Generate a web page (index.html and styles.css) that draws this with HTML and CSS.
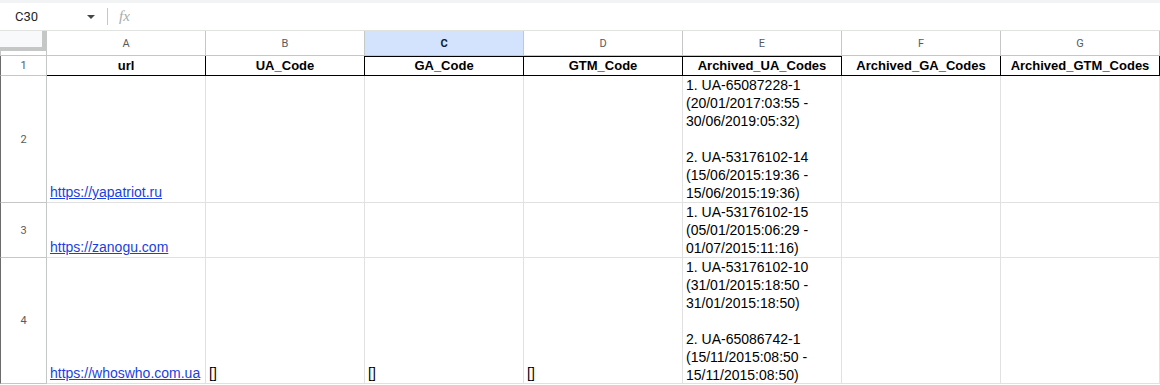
FILE: index.html
```html
<!doctype html>
<html lang="en">
  <head>
    <meta charset="UTF-8" />
    <meta name="viewport" content="width=device-width, initial-scale=1.0" />
    <title>Tracking codes sheet</title>
    <link rel="stylesheet" href="styles.css">
  </head>
  <body>
    <!-- Name box and formula bar -->
    <div class="toolbar">
      <div class="name-box">
        <span class="cell-ref">C30</span>
        <span class="caret"></span>
      </div>
      <span class="divider"></span>
      <span class="fx">fx</span>
    </div>

    <!-- Sheet grid -->
    <div class="sheet">
      <!-- column letters -->
      <div class="corner"><div class="corner-box"></div></div>
      <div class="col-head">A</div>
      <div class="col-head">B</div>
      <div class="col-head active">C</div>
      <div class="col-head">D</div>
      <div class="col-head">E</div>
      <div class="col-head">F</div>
      <div class="col-head">G</div>

      <!-- row 1: titles -->
      <div class="row-head">1</div>
      <div class="cell title">url</div>
      <div class="cell title">UA_Code</div>
      <div class="cell title top-line">GA_Code</div>
      <div class="cell title top-line">GTM_Code</div>
      <div class="cell title top-line">Archived_UA_Codes</div>
      <div class="cell title">Archived_GA_Codes</div>
      <div class="cell title">Archived_GTM_Codes</div>

      <!-- row 2 -->
      <div class="row-head">2</div>
      <div class="cell bottom"><a href="#">https://yapatriot.ru</a></div>
      <div class="cell"></div>
      <div class="cell"></div>
      <div class="cell"></div>
      <div class="cell wrap">1. UA-65087228-1
(20/01/2017:03:55 -
30/06/2019:05:32)

2. UA-53176102-14
(15/06/2015:19:36 -
15/06/2015:19:36)</div>
      <div class="cell"></div>
      <div class="cell"></div>

      <!-- row 3 -->
      <div class="row-head">3</div>
      <div class="cell bottom"><a href="#">https://zanogu.com</a></div>
      <div class="cell"></div>
      <div class="cell"></div>
      <div class="cell"></div>
      <div class="cell wrap">1. UA-53176102-15
(05/01/2015:06:29 -
01/07/2015:11:16)</div>
      <div class="cell"></div>
      <div class="cell"></div>

      <!-- row 4 -->
      <div class="row-head">4</div>
      <div class="cell bottom"><a href="#">https://whoswho.com.ua</a></div>
      <div class="cell bottom">[]</div>
      <div class="cell bottom">[]</div>
      <div class="cell bottom">[]</div>
      <div class="cell wrap">1. UA-53176102-10
(31/01/2015:18:50 -
31/01/2015:18:50)

2. UA-65086742-1
(15/11/2015:08:50 -
15/11/2015:08:50)</div>
      <div class="cell"></div>
      <div class="cell"></div>
    </div>
  </body>
</html>
```

FILE: styles.css
```css
body {
  margin: 0;
  background: #fff;
  font-family: "Liberation Sans", Arial, sans-serif;
  overflow: hidden;
}
.toolbar {
  display: flex;
  align-items: center;
  height: 27px;
  border-top: 3px solid #f1f3f4;
  border-bottom: 1px solid #e1e3e1;
  font-family: Roboto, "Liberation Sans", sans-serif;
}
.name-box {
  display: flex;
  align-items: center;
  justify-content: space-between;
  width: 80px;
  padding-left: 15px;
}
.cell-ref {
  font-size: 13px;
  color: #1f1f1f;
}
.caret {
  width: 0;
  height: 0;
  border-left: 4px solid transparent;
  border-right: 4px solid transparent;
  border-top: 4px solid #444746;
}
.divider {
  width: 1px;
  height: 17px;
  margin-left: 12px;
  background: #c4c7c5;
}
.fx {
  margin-left: 11px;
  font-family: "Liberation Serif", serif;
  font-style: italic;
  font-size: 15px;
  color: #a8abad;
}
.sheet {
  display: grid;
  grid-template-columns: 47px repeat(7, 159px);
  grid-template-rows: 25px 20px 127px 55px 126px;
}
.sheet > div {
  box-sizing: border-box;
  border-right: 1px solid #e1e1e1;
  border-bottom: 1px solid #e1e1e1;
}
.corner {
  border-left: 1px solid #6b6b6b;
  border-color: #c4c7c5 !important;
}
.corner-box {
  height: 20px;
  margin-left: -1px;
  background: #f8f9fa;
  border-right: 4px solid #c4c7c5;
  border-bottom: 4px solid #c4c7c5;
  box-sizing: border-box;
}
.col-head {
  display: flex;
  align-items: center;
  justify-content: center;
  font-family: Roboto, "Liberation Sans", sans-serif;
  font-size: 11px;
  color: #575b5f;
  border-right-color: #c4c7c5 !important;
  border-bottom-color: #c4c7c5 !important;
}
.col-head.active {
  background: #d3e3fd;
  color: #0b1e3d;
  font-weight: bold;
}
.row-head {
  display: flex;
  align-items: center;
  justify-content: center;
  border-left: 1px solid #6b6b6b;
  font-family: Roboto, "Liberation Sans", sans-serif;
  font-size: 11px;
  color: #575b5f;
  border-right-color: #c4c7c5 !important;
  border-bottom-color: #c4c7c5 !important;
}
.cell {
  padding: 0 3px;
  font-size: 14px;
  line-height: 18px;
  color: #000;
  white-space: nowrap;
  overflow: hidden;
}
.cell.title {
  display: flex;
  align-items: center;
  justify-content: center;
  font-size: 13px;
  font-weight: bold;
  border-right-color: #000 !important;
  border-bottom-color: #000 !important;
}
.cell.top-line {
  box-shadow: inset 0 1px 0 #000;
}
.cell.bottom {
  display: flex;
  align-items: flex-end;
  padding-bottom: 1px;
}
.cell.wrap {
  white-space: pre;
}
.cell a {
  color: #1a3fe0;
  text-decoration: underline;
}
```
